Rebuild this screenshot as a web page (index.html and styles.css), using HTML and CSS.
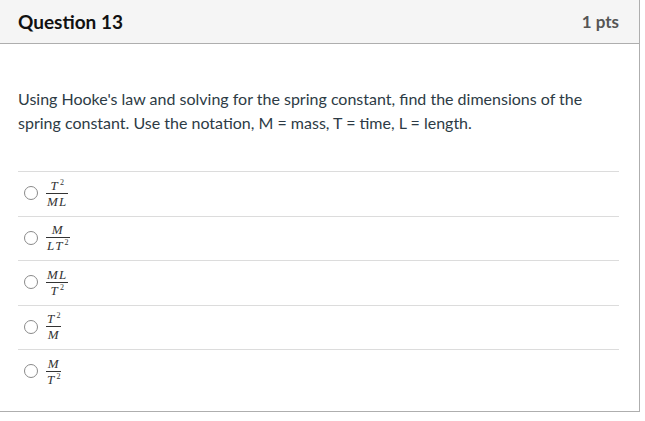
FILE: index.html
```html
<!DOCTYPE html>
<html>
<head>
<meta charset="utf-8">
<link rel="stylesheet" href="styles.css">
</head>
<body>
<div class="card">
  <div class="header">
    <span class="title">Question 13</span>
    <span class="pts">1 pts</span>
  </div>
  <div class="body">
    <p class="text">Using Hooke's law and solving for the spring constant, find the dimensions of the spring constant. Use the notation, M = mass, T = time, L = length.</p>
    <div class="answers">
      <div class="answer">
        <span class="radio"></span>
        <span class="frac"><span class="num"><i>T</i><sup>2</sup></span><span class="den"><i>ML</i></span></span>
      </div>
      <div class="answer">
        <span class="radio"></span>
        <span class="frac"><span class="num"><i>M</i></span><span class="den"><i>LT</i><sup>2</sup></span></span>
      </div>
      <div class="answer">
        <span class="radio"></span>
        <span class="frac"><span class="num"><i>ML</i></span><span class="den"><i>T</i><sup>2</sup></span></span>
      </div>
      <div class="answer">
        <span class="radio"></span>
        <span class="frac"><span class="num"><i>T</i><sup>2</sup></span><span class="den"><i>M</i></span></span>
      </div>
      <div class="answer">
        <span class="radio"></span>
        <span class="frac"><span class="num"><i>M</i></span><span class="den"><i>T</i><sup>2</sup></span></span>
      </div>
    </div>
  </div>
</div>
</body>
</html>
```
FILE: styles.css
```css
html, body {
  margin: 0;
  padding: 0;
  background: #fff;
}
body {
  font-family: Lato, "Liberation Sans", sans-serif;
  color: #2d3b45;
}
.card {
  margin-left: -1px;
  width: 639px;
  height: 411px;
  border: 1px solid #aeaeae;
  border-top: none;
  background: #fff;
}
.header {
  height: 43px;
  background: #f5f5f5;
  border-bottom: 1px solid #aeaeae;
  display: flex;
  align-items: center;
  justify-content: space-between;
  padding: 0 20px 0 18px;
}
.title {
  font-weight: 700;
  font-size: 19px;
  color: #111;
}
.pts {
  font-weight: 700;
  font-size: 17px;
  color: #555;
}
.body {
  padding: 0 20px 0 18px;
}
.text {
  margin: 0;
  padding-top: 43px;
  font-size: 16px;
  line-height: 24px;
  color: #2d3b45;
}
.answers {
  margin-top: 36px;
}
.answer {
  border-top: 1px solid #dcdcdc;
  height: 43.5px;
  display: flex;
  align-items: center;
  padding-left: 6px;
}
.radio {
  width: 12px;
  height: 12px;
  border: 1px solid #8a8a8a;
  border-radius: 50%;
  background: #fff;
  margin-right: 7px;
  margin-top: -1px;
}
.frac {
  display: inline-flex;
  flex-direction: column;
  align-items: center;
  font-family: "Liberation Serif", "DejaVu Serif", serif;
  font-size: 13px;
  line-height: 12px;
  color: #333;
  padding: 0 1px;
}
.frac i {
  font-style: italic;
  letter-spacing: 1.2px;
}
.frac sup {
  font-size: 8px;
  line-height: 0;
  vertical-align: 5px;
  margin-left: 1px;
}
.num {
  padding: 0 1px 1px;
}
.den {
  border-top: 1px solid #333;
  padding: 2px 1px 0;
  align-self: stretch;
  text-align: center;
}
```
